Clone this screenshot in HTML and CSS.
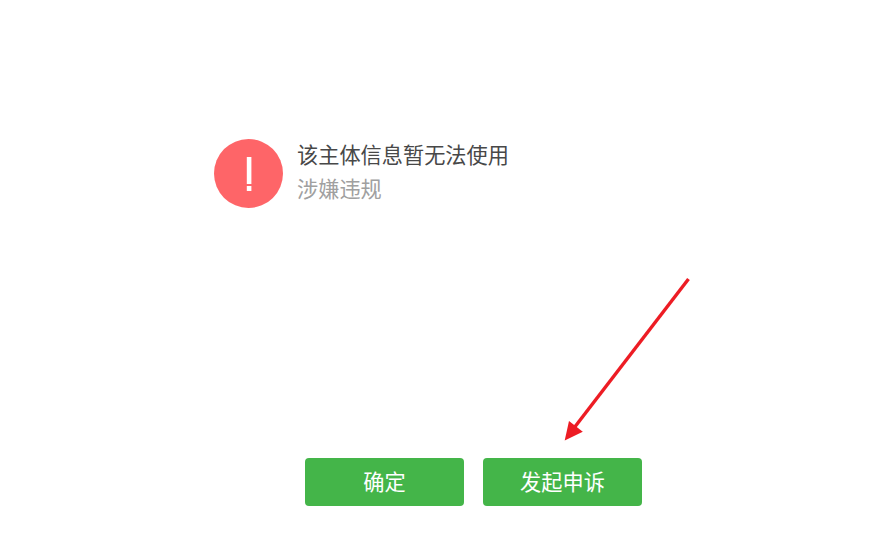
FILE: index.html
```html
<!DOCTYPE html>
<html lang="zh-CN">
<head>
    <meta charset="UTF-8">
    <title>该主体信息暂无法使用</title>
    <link rel="stylesheet" href="styles.css">
</head>
<body>
    <div class="page">
        <div class="message">
            <div class="warn-icon">
                <svg width="69" height="69" viewBox="0 0 69 69">
                    <circle cx="34.5" cy="34.5" r="34.5" fill="#fe6568"/>
                    <rect x="32.8" y="18" width="4.6" height="27" fill="#fff"/>
                    <rect x="32.8" y="47" width="4.6" height="5" fill="#fff"/>
                </svg>
            </div>
            <div class="message-text">
                <div class="title">该主体信息暂无法使用</div>
                <div class="reason">涉嫌违规</div>
            </div>
        </div>
        <div class="actions">
            <button class="btn">确定</button>
            <button class="btn">发起申诉</button>
        </div>
        <!-- red arrow drawn over the screenshot -->
        <svg class="arrow" width="895" height="551" viewBox="0 0 895 551">
            <line x1="688.5" y1="279" x2="574" y2="428" stroke="#ed1c24" stroke-width="3.4"/>
            <polygon points="564.7,440.5 569,421 582.8,431.7" fill="#ed1c24"/>
        </svg>
    </div>
</body>
</html>
```

FILE: styles.css
```css
html, body {
    margin: 0;
    padding: 0;
    background: #fff;
}

body {
    font-family: "Noto Sans CJK SC", "Liberation Sans", sans-serif;
}

.page {
    position: relative;
    width: 895px;
    height: 551px;
    overflow: hidden;
    box-sizing: border-box;
    padding-top: 139px;
}

.message {
    display: flex;
    align-items: flex-start;
    gap: 14px;
    margin-left: 214px;
}

.warn-icon {
    width: 69px;
    height: 69px;
    flex: none;
}

.warn-icon svg {
    display: block;
}

.message-text {
    font-size: 21.2px;
    line-height: 34px;
    margin-top: -2px;
}

.title {
    color: #484848;
}

.reason {
    color: #a0a0a0;
}

.actions {
    display: flex;
    gap: 19px;
    margin-top: 250px;
    margin-left: 305px;
}

.btn {
    width: 159px;
    height: 48px;
    padding: 0 0 4px;
    border: none;
    border-radius: 4px;
    background-color: #44b549;
    color: #fff;
    font-family: inherit;
    font-size: 21.2px;
    cursor: pointer;
}

.arrow {
    position: absolute;
    left: 0;
    top: 0;
}
```
